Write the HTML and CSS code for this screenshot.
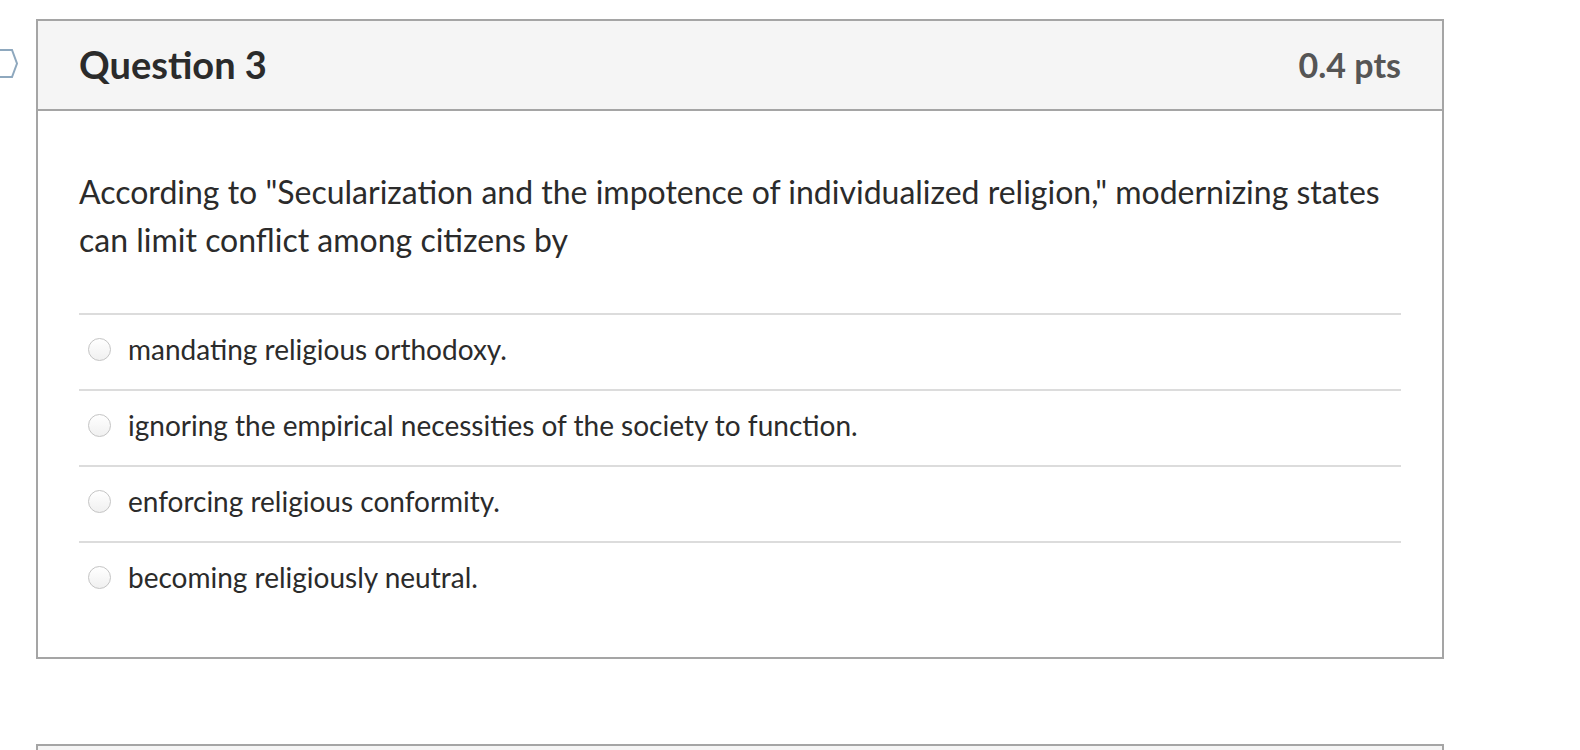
FILE: index.html
```html
<!DOCTYPE html>
<html>
<head>
<meta charset="utf-8">
<link rel="stylesheet" href="styles.css">
</head>
<body>
<div class="page">
  <svg class="flag" width="20" height="34" viewBox="0 0 20 34"><polyline points="-2,1 12,1 17,14.5 12,28 -2,28" fill="none" stroke="#8ea8be" stroke-width="2"/></svg>
  <div class="question">
    <div class="q-header">
      <h2 class="q-title">Question 3</h2>
      <div class="q-pts">0.4 pts</div>
    </div>
    <div class="q-body">
      <p class="q-text">According to "Secularization and the impotence of individualized religion," modernizing states can limit conflict among citizens by</p>
      <div class="answers">
        <label class="answer"><span class="radio"></span><span class="a-text">mandating religious orthodoxy.</span></label>
        <label class="answer"><span class="radio"></span><span class="a-text">ignoring the empirical necessities of the society to function.</span></label>
        <label class="answer"><span class="radio"></span><span class="a-text">enforcing religious conformity.</span></label>
        <label class="answer"><span class="radio"></span><span class="a-text">becoming religiously neutral.</span></label>
      </div>
    </div>
  </div>
  <div class="question next">
    <div class="q-header"></div>
  </div>
</div>
</body>
</html>
```

FILE: styles.css
```css
html, body {
  margin: 0;
  padding: 0;
  background: #fff;
  font-family: Lato, "Open Sans", sans-serif;
  color: #2b2b2b;
}
.page {
  position: relative;
  padding: 19px 0 0 36px;
  width: 1408px;
  overflow: hidden;
  height: 731px;
}
.flag {
  position: absolute;
  left: 0;
  top: 49px;
}
.question {
  border: 2px solid #a5a5a5;
  box-sizing: border-box;
  width: 1408px;
}
.question.next {
  margin-top: 85px;
  height: 60px;
}
.q-header {
  background: #f5f5f5;
  border-bottom: 2px solid #a5a5a5;
  height: 90px;
  box-sizing: border-box;
  display: flex;
  align-items: center;
  justify-content: space-between;
  padding: 0 41px 2px 41px;
}
.next .q-header {
  border-bottom: none;
  height: 100%;
}
.q-title {
  margin: 0;
  font-size: 38px;
  font-weight: 700;
  color: #2b2b2b;
}
.q-pts {
  font-size: 34px;
  font-weight: 700;
  color: #555;
}
.q-body {
  padding: 57px 41px 0 41px;
  height: 546px;
  box-sizing: border-box;
}
.q-text {
  margin: 0;
  font-size: 32px;
  line-height: 48px;
  color: #2b2b2b;
}
.answers {
  margin-top: 49px;
}
.answer {
  display: flex;
  align-items: center;
  height: 76px;
  padding-bottom: 6px;
  border-top: 2px solid #dcdcdc;
  box-sizing: border-box;
}
.radio {
  width: 23px;
  height: 23px;
  border-radius: 50%;
  border: 1px solid #c4c4c4;
  background: linear-gradient(#fff, #f0f0f0);
  margin-left: 9px;
  margin-right: 17px;
  box-sizing: border-box;
  flex: none;
}
.a-text {
  font-size: 28px;
  color: #2b2b2b;
}
```
